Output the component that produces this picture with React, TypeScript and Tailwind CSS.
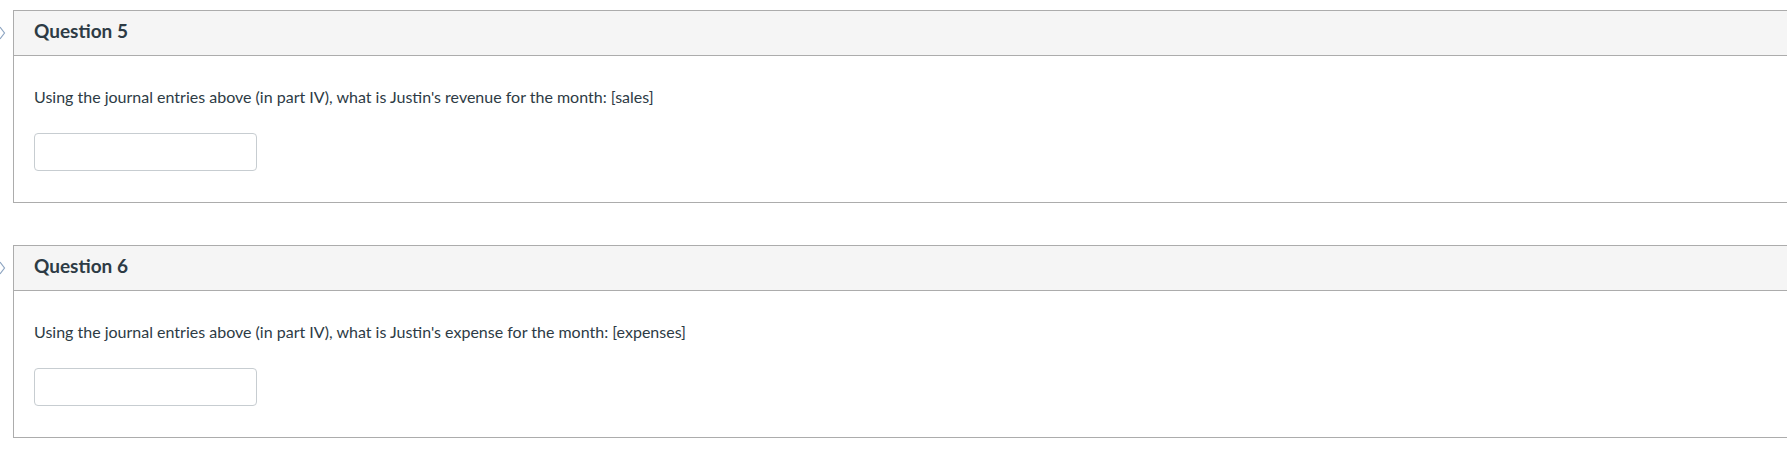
const QUESTIONS = [
  {
    id: 5,
    text: "Using the journal entries above (in part IV), what is Justin's revenue for the month: [sales]",
  },
  {
    id: 6,
    text: "Using the journal entries above (in part IV), what is Justin's expense for the month: [expenses]",
  },
];

function FlagMark() {
  // the question flag sits mostly off-screen, only its tip shows
  return (
    <svg width="6" height="14" viewBox="0 0 6 14" className="absolute left-0 top-[16px]">
      <path d="M0 1 L4.5 7 L0 13" fill="none" stroke="#8fa6c2" strokeWidth="1.2" />
    </svg>
  );
}

function Question({ id, text }: { id: number; text: string }) {
  return (
    <div className="relative pl-[13px]">
      <FlagMark />
      <div className="mr-[-40px] border border-[#acacac] bg-white">
        <div className="h-[45px] bg-[#f5f5f5] border-b border-[#acacac] flex items-center pl-[20px] pb-[5px]">
          <h2 className="text-[19px] font-bold text-[#2d3b45] leading-none">Question {id}</h2>
        </div>
        <div className="pl-[20px] pt-[29px] pb-[31px]">
          <p className="text-[16px] leading-[24px] text-[#2d3b45]">{text}</p>
          <input
            type="text"
            className="mt-[24px] block w-[223px] h-[38px] rounded-[4px] border border-[#c7cdd1] bg-white outline-none"
          />
        </div>
      </div>
    </div>
  );
}

export default function App() {
  return (
    <div
      className="w-full h-[451px] overflow-hidden bg-white pt-[10px] flex flex-col gap-[42px]"
      style={{ fontFamily: "Lato, 'Noto Sans', sans-serif" }}
    >
      {QUESTIONS.map((q) => (
        <Question key={q.id} id={q.id} text={q.text} />
      ))}
    </div>
  );
}
